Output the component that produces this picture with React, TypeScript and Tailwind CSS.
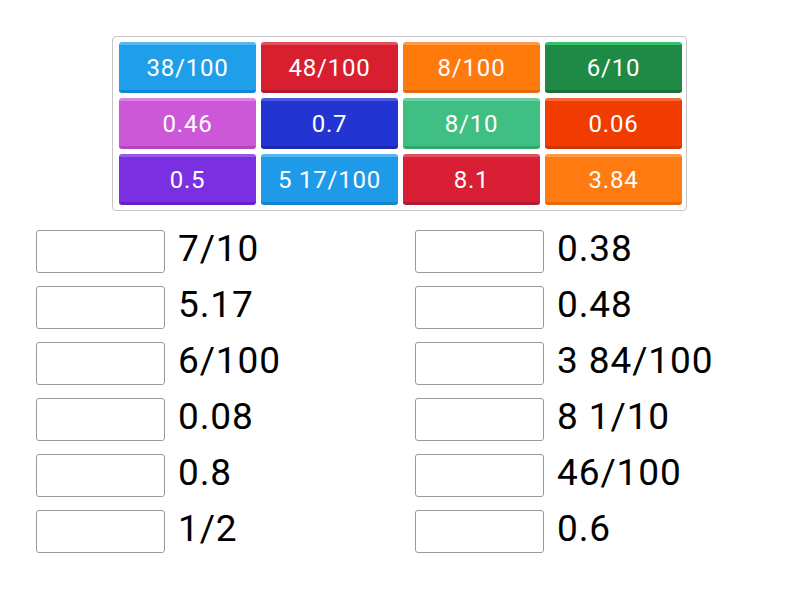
import React from "react";

const tiles: { t: string; c: string }[] = [
  { t: "38/100", c: "bg-[#1f9ee9] border-t-[#55b9f2] border-b-[#1386d2]" },
  { t: "48/100", c: "bg-[#d81f30] border-t-[#e2505c] border-b-[#b8182a]" },
  { t: "8/100", c: "bg-[#ff7a0c] border-t-[#ff9a45] border-b-[#e4680a]" },
  { t: "6/10", c: "bg-[#1f8a45] border-t-[#34c26a] border-b-[#18733a]" },
  { t: "0.46", c: "bg-[#cc58d8] border-t-[#da82e4] border-b-[#b545c2]" },
  { t: "0.7", c: "bg-[#2234d2] border-t-[#4a58dc] border-b-[#1a28b4]" },
  { t: "8/10", c: "bg-[#3fbf84] border-t-[#6ccf9f] border-b-[#33a670]" },
  { t: "0.06", c: "bg-[#f03c00] border-t-[#f46a38] border-b-[#d03400]" },
  { t: "0.5", c: "bg-[#7a2fe0] border-t-[#9658e6] border-b-[#6620c8]" },
  { t: "5 17/100", c: "bg-[#1f9ae8] border-t-[#55b6f0] border-b-[#1484d0]" },
  { t: "8.1", c: "bg-[#d81f35] border-t-[#e25060] border-b-[#b8182c]" },
  { t: "3.84", c: "bg-[#ff7a10] border-t-[#ff9a48] border-b-[#e4680c]" },
];

const left = ["7/10", "5.17", "6/100", "0.08", "0.8", "1/2"];
const right = ["0.38", "0.48", "3 84/100", "8 1/10", "46/100", "0.6"];

function Row({ label }: { label: string }) {
  return (
    <div className="flex items-start h-[43px]">
      <div className="w-[129px] h-[43px] border border-[#9a9a9a] rounded-[3px] bg-white shrink-0" />
      <div className="ml-[13px] text-[37px] leading-[37px] tracking-[0.9px] text-black whitespace-nowrap">
        {label}
      </div>
    </div>
  );
}

export default function App() {
  return (
    <div
      className="w-[800px] h-[600px] bg-white relative overflow-hidden"
      style={{ fontFamily: "Roboto, 'Liberation Sans', sans-serif" }}
    >
      <div className="ml-[112px] mt-[36px] w-[575px] h-[175px] border border-[#c4c4c4] rounded-[4px] p-[5px] pt-[5px] pl-[6px]">
        <div className="grid grid-cols-[137px_137px_137px_137px] gap-x-[5px] gap-y-[5px]">
          {tiles.map((tl, i) => (
            <div
              key={i}
              className={`h-[51px] rounded-[3px] border-t-[3px] border-b-[3px] flex items-center justify-center text-white text-[24px] tracking-[0.8px] ${tl.c}`}
            >
              {tl.t}
            </div>
          ))}
        </div>
      </div>
      <div className="flex mt-[19px] ml-[36px]">
        <div className="w-[379px] flex flex-col gap-[13px]">
          {left.map((l) => (
            <Row key={l} label={l} />
          ))}
        </div>
        <div className="flex flex-col gap-[13px]">
          {right.map((l) => (
            <Row key={l} label={l} />
          ))}
        </div>
      </div>
    </div>
  );
}
